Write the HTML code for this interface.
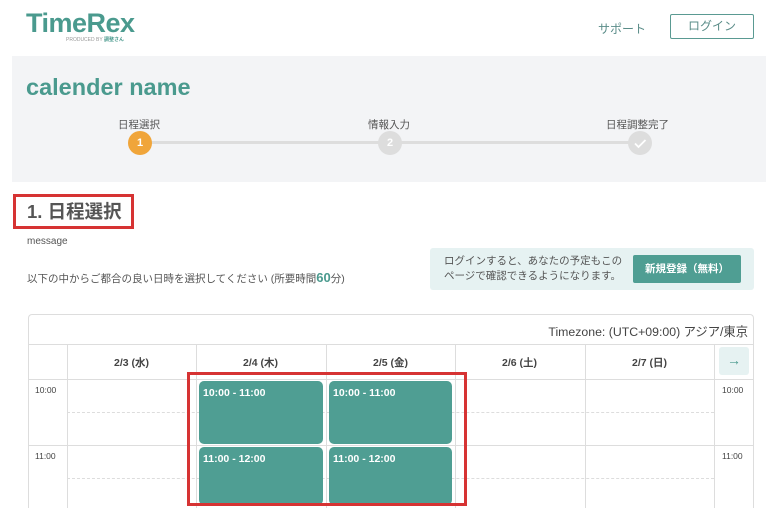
<!DOCTYPE html>
<html style="width:768px;height:508px;overflow:hidden"><head><meta charset="utf-8"><style>
*{box-sizing:border-box;margin:0;padding:0}
html,body{width:768px;height:508px;overflow:hidden}
body{background:#fff;font-family:"Liberation Sans","Noto Sans CJK JP",sans-serif;color:#555;position:relative}
.a{position:absolute}
.ev{position:absolute;background:#4f9e93;border-radius:5px;color:#fff;font-size:10.5px;font-weight:bold;padding:6px 0 0 4px}
.vl{position:absolute;top:344px;height:164px;width:1px;background:#ddd}
.day{position:absolute;top:355px;font-size:10.5px;font-weight:bold;color:#444;text-align:center;width:129px}
</style></head><body>
<div class="a" style="left:26px;top:8px;font-size:27px;font-weight:bold;color:#4a9a8e;letter-spacing:-0.5px">TimeRex</div>
<div class="a" style="left:66px;top:36px;font-size:5px;color:#999">PRODUCED BY <b style="color:#4a9a8e">調整さん</b></div>
<div class="a" style="left:598px;top:20px;font-size:12px;color:#5a8c88">サポート</div>
<div class="a" style="left:670px;top:14px;width:84px;height:25px;border:1px solid #5a9a92;border-radius:2px;font-size:12px;color:#5a8c88;text-align:center;line-height:23px">ログイン</div>

<div class="a" style="left:12px;top:56px;width:754px;height:126px;background:#f3f4f6"></div>
<div class="a" style="left:26px;top:74px;font-size:23.5px;font-weight:bold;color:#4a9a8e">calender name</div>
<div class="a" style="left:140px;top:141px;width:500px;height:3px;background:#ddd"></div>
<div class="a" style="left:118px;top:117px;font-size:10.5px;color:#555">日程選択</div>
<div class="a" style="left:368px;top:117px;font-size:10.5px;color:#555">情報入力</div>
<div class="a" style="left:606px;top:117px;font-size:10.5px;color:#555">日程調整完了</div>
<div class="a" style="left:128px;top:131px;width:24px;height:24px;border-radius:50%;background:#f0a53a;color:#fff;font-size:11px;font-weight:bold;text-align:center;line-height:24px">1</div>
<div class="a" style="left:378px;top:131px;width:24px;height:24px;border-radius:50%;background:#ddd;color:#fff;font-size:11px;font-weight:bold;text-align:center;line-height:24px">2</div>
<div class="a" style="left:628px;top:131px;width:24px;height:24px;border-radius:50%;background:#ddd"><svg width="24" height="24"><path d="M7 12.5l3.5 3.5 7-7" stroke="#fff" stroke-width="1.8" fill="none"/></svg></div>

<div class="a" style="left:13px;top:194px;width:121px;height:35px;border:3px solid #d63333"></div>
<div class="a" style="left:27px;top:198px;font-size:18.5px;font-weight:bold;color:#555">1. 日程選択</div>
<div class="a" style="left:27px;top:236px;font-size:10px;color:#555">message</div>
<div class="a" style="left:27px;top:270px;font-size:10.5px;color:#555">以下の中からご都合の良い日時を選択してください (所要時間<b style="color:#4a9a8e;font-size:13px">60</b>分)</div>

<div class="a" style="left:430px;top:248px;width:324px;height:42px;background:#e6f2f2;border-radius:3px"></div>
<div class="a" style="left:444px;top:254px;font-size:10.5px;line-height:15px;color:#555">ログインすると、あなたの予定もこの<br>ページで確認できるようになります。</div>
<div class="a" style="left:633px;top:255px;width:108px;height:28px;background:#4f9e93;border-radius:2px;color:#fff;font-size:10.5px;font-weight:bold;text-align:center;line-height:28px">新規登録（無料）</div>

<div class="a" style="left:28px;top:314px;width:726px;height:194px;border:1px solid #ddd;border-bottom:none;border-radius:4px 4px 0 0"></div>
<div class="a" style="left:530px;top:322px;width:218px;text-align:right;font-size:12.3px;color:#444">Timezone: (UTC+09:00) アジア/東京</div>
<div class="a" style="left:28px;top:344px;width:726px;height:1px;background:#ddd"></div>
<div class="a" style="left:28px;top:379px;width:726px;height:1px;background:#ddd"></div>
<div class="a" style="left:28px;top:445px;width:726px;height:1px;background:#ddd"></div>
<div class="a" style="left:67px;top:412px;width:647px;border-top:1px dashed #ddd"></div>
<div class="a" style="left:67px;top:478px;width:647px;border-top:1px dashed #ddd"></div>
<div class="vl" style="left:67px"></div><div class="vl" style="left:196px"></div><div class="vl" style="left:326px"></div><div class="vl" style="left:455px"></div><div class="vl" style="left:585px"></div><div class="vl" style="left:714px"></div>
<div class="day" style="left:67px">2/3 (水)</div>
<div class="day" style="left:196px">2/4 (木)</div>
<div class="day" style="left:326px">2/5 (金)</div>
<div class="day" style="left:455px">2/6 (土)</div>
<div class="day" style="left:585px">2/7 (日)</div>
<div class="a" style="left:719px;top:347px;width:30px;height:28px;background:#e6f2f2;border-radius:3px;color:#4a9a8e;font-size:14px;text-align:center;line-height:27px">→</div>
<div class="a" style="left:35px;top:385px;font-size:8.5px;color:#444">10:00</div>
<div class="a" style="left:35px;top:451px;font-size:8.5px;color:#444">11:00</div>
<div class="a" style="left:722px;top:385px;font-size:8.5px;color:#444">10:00</div>
<div class="a" style="left:722px;top:451px;font-size:8.5px;color:#444">11:00</div>
<div class="ev" style="left:199px;top:381px;width:124px;height:63px">10:00 - 11:00</div>
<div class="ev" style="left:329px;top:381px;width:123px;height:63px">10:00 - 11:00</div>
<div class="ev" style="left:199px;top:447px;width:124px;height:58px">11:00 - 12:00</div>
<div class="ev" style="left:329px;top:447px;width:123px;height:58px">11:00 - 12:00</div>
<div class="a" style="left:187px;top:372px;width:280px;height:134px;border:3px solid #d63333"></div>
</body></html>
